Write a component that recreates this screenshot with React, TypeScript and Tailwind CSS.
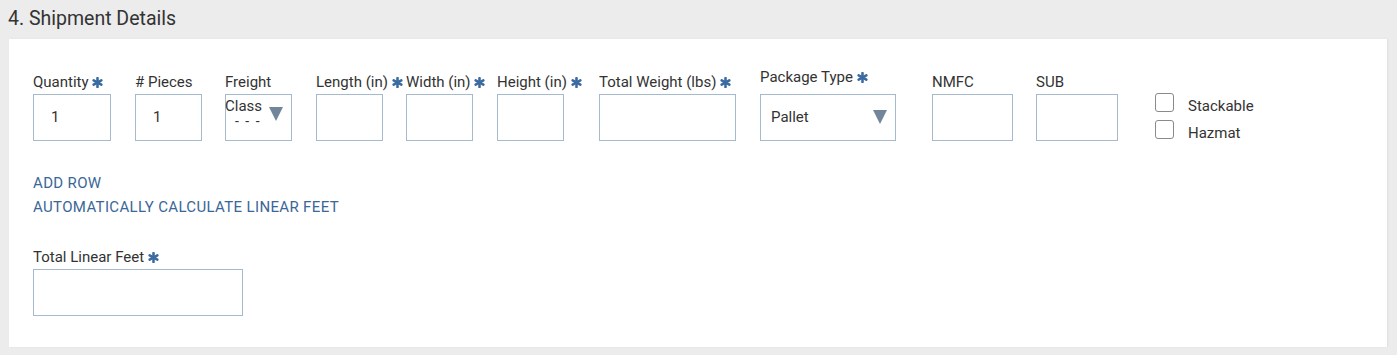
import { type ReactNode } from 'react';

const Star = () => (
  <svg width="11" height="11" viewBox="0 0 12 12" className="inline-block align-[-1px]">
    <g stroke="#3b6ba0" strokeWidth="2.8" strokeLinecap="round">
      <line x1="6" y1="1.2" x2="6" y2="10.8" />
      <line x1="1.8" y1="3.6" x2="10.2" y2="8.4" />
      <line x1="1.8" y1="8.4" x2="10.2" y2="3.6" />
    </g>
  </svg>
);

const Caret = () => (
  <svg width="14" height="14" viewBox="0 0 14 14">
    <polygon points="0,0 14,0 7,14" fill="#71869b" />
  </svg>
);

interface FieldProps {
  label: ReactNode;
  col: string;
  box: string;
  children?: ReactNode;
  labelClass?: string;
}

function Field({ label, col, box, children, labelClass = '' }: FieldProps) {
  return (
    <div className={`flex flex-col shrink-0 ${col}`}>
      <div className={`relative z-10 h-[20px] whitespace-nowrap leading-[16px] text-[15px] text-[#333] ${labelClass}`}>
        {label}
      </div>
      <div className={`h-[47px] border border-[#a6bacd] bg-white flex items-center ${box}`}>
        {children}
      </div>
    </div>
  );
}

export default function App() {
  return (
    <div className="min-h-[355px] bg-[#ececec] font-['Roboto',sans-serif] text-[#333]">
      <div className="h-[39px] pl-[8px] pt-[7px] text-[19.5px] leading-[24px] text-[#333]">
        4. Shipment Details
      </div>
      <div className="ml-[9px] mr-[10px] bg-white pl-[24px] pt-[35px] pb-[31px] shadow-[1px_0_2px_rgba(0,0,0,0.06)]">
        {/* item row */}
        <div className="flex items-start">
          <Field label={<>Quantity <Star /></>} col="w-[102px]" box="w-[78px] pl-[17px]">
            <span className="text-[15px]">1</span>
          </Field>
          <Field label="# Pieces" col="w-[90px]" box="w-[67px] pl-[17px]">
            <span className="text-[15px]">1</span>
          </Field>
          <Field
            label={<span className="block w-[67px] whitespace-normal leading-[24px] -mt-[4px]">Freight Class</span>}
            col="w-[91px]"
            box="w-[67px] pl-[9px] pr-[8px] justify-between"
          >
            <span className="text-[14px] leading-[8px] tracking-[1.5px] mt-[7px]">- - -</span>
            <span className="-mt-[8px]"><Caret /></span>
          </Field>
          <Field label={<>Length (in) <Star /></>} col="w-[90px]" box="w-[67px]" />
          <Field label={<>Width (in) <Star /></>} col="w-[91px]" box="w-[67px]" />
          <Field label={<>Height (in) <Star /></>} col="w-[102px]" box="w-[67px]" />
          <Field label={<>Total Weight (lbs) <Star /></>} col="w-[161px]" box="w-[137px]" />
          <Field
            label={<>Package Type <Star /></>}
            labelClass="-mt-[5px] h-[25px]"
            col="w-[172px]"
            box="w-[136px] pl-[10px] pr-[8px] justify-between"
          >
            <span className="text-[15px]">Pallet</span>
            <span className="-mt-[2px]"><Caret /></span>
          </Field>
          <Field label="NMFC" col="w-[104px]" box="w-[81px]" />
          <Field label="SUB" col="w-[119px]" box="w-[82px]" />
          <div className="flex flex-col gap-[6px] pt-[19px]">
            {['Stackable', 'Hazmat'].map((name) => (
              <label key={name} className="flex items-start gap-[14px] text-[15px] leading-[15px]">
                <span className="w-[19px] h-[19px] rounded-[3px] border border-[#8a8a8a] bg-white" />
                <span className="pt-[6px]">{name}</span>
              </label>
            ))}
          </div>
        </div>

        {/* links */}
        <div className="mt-[30px] flex flex-col text-[15px] tracking-[0.35px] leading-[24px] text-[#3a6797]">
          <span>ADD ROW</span>
          <span>AUTOMATICALLY CALCULATE LINEAR FEET</span>
        </div>

        {/* total linear feet */}
        <div className="mt-[30px] flex">
          <Field label={<>Total Linear Feet <Star /></>} col="w-[210px]" box="w-[210px]" />
        </div>
      </div>
    </div>
  );
}
